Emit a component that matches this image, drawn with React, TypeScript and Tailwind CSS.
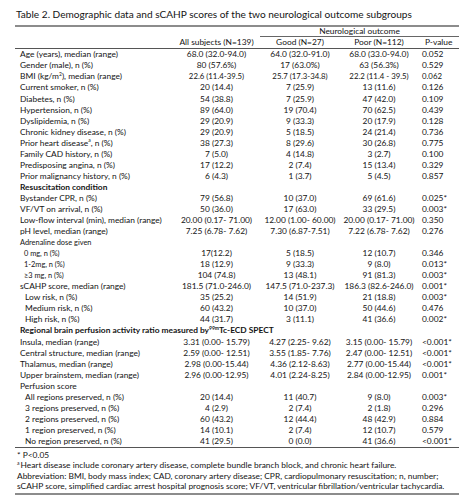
import React from "react";

type Row = {
  label: React.ReactNode;
  v?: [string, string, string, string];
  kind?: "n" | "sub" | "small" | "bold" | "plain";
  smallVals?: boolean;
};

const rows: Row[] = [
  { label: "Age (years), median (range)", v: ["68.0 (32.0-94.0)", "64.0 (32.0-91.0)", "68.0 (33.0-94.0)", "0.052"] },
  { label: "Gender (male), n (%)", v: ["80 (57.6%)", "17 (63.0%)", "63 (56.3%)", "0.529"] },
  {
    label: (
      <>
        BMI (kg/m<sup className="text-[5px]">2</sup>), median (range)
      </>
    ),
    v: ["22.6 (11.4-39.5)", "25.7 (17.3-34.8)", "22.2 (11.4 - 39.5)", "0.062"],
    smallVals: true,
  },
  { label: "Current smoker, n (%)", v: ["20 (14.4)", "7 (25.9)", "13 (11.6)", "0.126"] },
  { label: "Diabetes, n (%)", v: ["54 (38.8)", "7 (25.9)", "47 (42.0)", "0.109"] },
  { label: "Hypertension, n (%)", v: ["89 (64.0)", "19 (70.4)", "70 (62.5)", "0.439"] },
  { label: "Dyslipidemia, n (%)", v: ["29 (20.9)", "9 (33.3)", "20 (17.9)", "0.128"] },
  { label: "Chronic kidney disease, n (%)", v: ["29 (20.9)", "5 (18.5)", "24 (21.4)", "0.736"] },
  {
    label: (
      <>
        Prior heart disease<sup className="text-[5px]">a</sup>, n (%)
      </>
    ),
    v: ["38 (27.3)", "8 (29.6)", "30 (26.8)", "0.775"],
  },
  { label: "Family CAD history, n (%)", v: ["7 (5.0)", "4 (14.8)", "3 (2.7)", "0.100"] },
  { label: "Predisposing angina, n (%)", v: ["17 (12.2)", "2 (7.4)", "15 (13.4)", "0.329"] },
  { label: "Prior malignancy history, n (%)", v: ["6 (4.3)", "1 (3.7)", "5 (4.5)", "0.857"] },
  { label: "Resuscitation condition", kind: "bold" },
  { label: "Bystander CPR, n (%)", v: ["79 (56.8)", "10 (37.0)", "69 (61.6)", "0.025*"] },
  { label: "VF/VT on arrival, n (%)", v: ["50 (36.0)", "17 (63.0)", "33 (29.5)", "0.003*"] },
  { label: "Low-flow interval (min), median (range)", v: ["20.00 (0.17- 71.00)", "12.00 (1.00- 60.00)", "20.00 (0.17- 71.00)", "0.350"] },
  { label: "pH level, median (range)", v: ["7.25 (6.78- 7.62)", "7.30 (6.87-7.51)", "7.22 (6.78- 7.62)", "0.276"] },
  { label: "Adrenaline dose given", kind: "small" },
  { label: "0 mg, n (%)", v: ["17(12.2)", "5 (18.5)", "12 (10.7)", "0.346"], kind: "small" },
  { label: "1-2mg, n (%)", v: ["18 (12.9)", "9 (33.3)", "9 (8.0)", "0.013*"], kind: "small" },
  { label: "≥3 mg, n (%)", v: ["104 (74.8)", "13 (48.1)", "91 (81.3)", "0.003*"], kind: "small" },
  { label: "sCAHP score, median (range)", v: ["181.5 (71.0-246.0)", "147.5 (71.0-237.3)", "186.3 (82.6-246.0)", "0.001*"] },
  { label: "Low risk, n (%)", v: ["35 (25.2)", "14 (51.9)", "21 (18.8)", "0.003*"], kind: "sub" },
  { label: "Medium risk, n (%)", v: ["60 (43.2)", "10 (37.0)", "50 (44.6)", "0.476"], kind: "sub" },
  { label: "High risk, n (%)", v: ["44 (31.7)", "3 (11.1)", "41 (36.6)", "0.002*"], kind: "sub" },
  {
    label: (
      <>
        Regional brain perfusion activity ratio measured by <sup className="text-[5px]">99m</sup>Tc-ECD SPECT
      </>
    ),
    kind: "bold",
  },
  { label: "Insula, median (range)", v: ["3.31 (0.00- 15.79)", "4.27 (2.25- 9.62)", "3.15 (0.00- 15.79)", "<0.001*"] },
  { label: "Central structure, median (range)", v: ["2.59 (0.00- 12.51)", "3.55 (1.85- 7.76)", "2.47 (0.00- 12.51)", "<0.001*"] },
  { label: "Thalamus, median (range)", v: ["2.98 (0.00-15.44)", "4.36 (2.12-8.63)", "2.77 (0.00-15.44)", "<0.001*"] },
  { label: "Upper brainstem, median (range)", v: ["2.96 (0.00-12.95)", "4.01 (2.24-8.25)", "2.84 (0.00-12.95)", "0.001*"] },
  { label: "Perfusion score", kind: "plain" },
  { label: "All regions preserved, n (%)", v: ["20 (14.4)", "11 (40.7)", "9 (8.0)", "0.003*"], kind: "sub" },
  { label: "3 regions preserved, n (%)", v: ["4 (2.9)", "2 (7.4)", "2 (1.8)", "0.296"], kind: "sub" },
  { label: "2 regions preserved, n (%)", v: ["60 (43.2)", "12 (44.4)", "48 (42.9)", "0.884"], kind: "sub" },
  { label: "1 region preserved, n (%)", v: ["14 (10.1)", "2 (7.4)", "12 (10.7)", "0.579"], kind: "sub" },
  { label: "No region preserved, n (%)", v: ["41 (29.5)", "0 (0.0)", "41 (36.6)", "<0.001*"], kind: "sub" },
];

function DataRow({ r }: { r: Row }) {
  if (r.kind === "bold") {
    return (
      <div className="col-span-5 h-[11.06px] flex items-center pl-[5px] font-bold whitespace-nowrap">{r.label}</div>
    );
  }
  if (!r.v) {
    return (
      <div
        className={
          "col-span-5 h-[11.06px] flex items-center pl-[5px] whitespace-nowrap " +
          (r.kind === "small" ? "text-[7.4px]" : "")
        }
      >
        {r.label}
      </div>
    );
  }
  const labelCls =
    r.kind === "small"
      ? "pl-[9px] text-[7.4px]"
      : r.kind === "sub"
      ? "pl-[10px]"
      : "pl-[5px]";
  const valCls = r.smallVals ? "text-[7.8px]" : "";
  return (
    <>
      <div className={"h-[11.06px] flex items-center whitespace-nowrap " + labelCls}>{r.label}</div>
      <div className={"h-[11.06px] flex items-center justify-center whitespace-nowrap " + valCls}>{r.v[0]}</div>
      <div className={"h-[11.06px] flex items-center justify-center whitespace-nowrap " + valCls}>{r.v[1]}</div>
      <div className={"h-[11.06px] flex items-center justify-center whitespace-nowrap " + valCls}>{r.v[2]}</div>
      <div className={"h-[11.06px] flex items-center pl-[6px] whitespace-nowrap " + valCls}>{r.v[3]}</div>
    </>
  );
}

export default function App() {
  return (
    <div
      className="w-[474px] h-[503px] bg-white text-[#141414] text-[8.4px] leading-none overflow-hidden"
      style={{ fontFamily: "Lato, 'Open Sans', sans-serif" }}
    >
      <div className="h-[25px] pl-[16px] pt-[9px] text-[10.1px] whitespace-nowrap">
        Table 2. Demographic data and sCAHP scores of the two neurological outcome subgroups
      </div>
      <div className="ml-[15px] w-[444px]">
        <div className="border-t-2 border-[#8c8c8c]" />
        <div className="grid grid-cols-[160px_83px_84px_74px_43px]">
          <div className="col-span-2" />
          <div className="col-span-3 ml-[2px] h-[10px] flex items-center justify-center border-b border-[#666]">
            Neurological outcome
          </div>
          <div className="h-[11px]" />
          <div className="h-[11px] flex items-center justify-center whitespace-nowrap">All subjects (N=139)</div>
          <div className="h-[11px] flex items-center justify-center whitespace-nowrap">Good (N=27)</div>
          <div className="h-[11px] flex items-center justify-center whitespace-nowrap">Poor (N=112)</div>
          <div className="h-[11px] flex items-center pl-[9px] whitespace-nowrap">P-value</div>
          <div className="col-span-5 border-t border-[#555]" />
          {rows.map((r, i) => (
            <DataRow key={i} r={r} />
          ))}
          <div className="col-span-5 border-t border-[#555]" />
        </div>
        <div className="pl-[2px] pt-[2px] pb-[1px] border-b-2 border-[#8c8c8c]">
          <div className="h-[10.5px] flex items-center">* P&lt;0.05</div>
          <div className="h-[10.5px] flex items-center whitespace-nowrap">
            <sup className="text-[5px] mr-[1px]">a</sup> Heart disease include coronary artery disease, complete bundle branch block, and chronic heart failure.
          </div>
          <div className="h-[10.5px] flex items-center whitespace-nowrap">
            Abbreviation: BMI, body mass index; CAD, coronary artery disease; CPR, cardiopulmonary resuscitation; n, number;
          </div>
          <div className="h-[10.5px] flex items-center whitespace-nowrap">
            sCAHP score, simplified cardiac arrest hospital prognosis score; VF/VT, ventricular fibrillation/ventricular tachycardia.
          </div>
        </div>
      </div>
    </div>
  );
}
